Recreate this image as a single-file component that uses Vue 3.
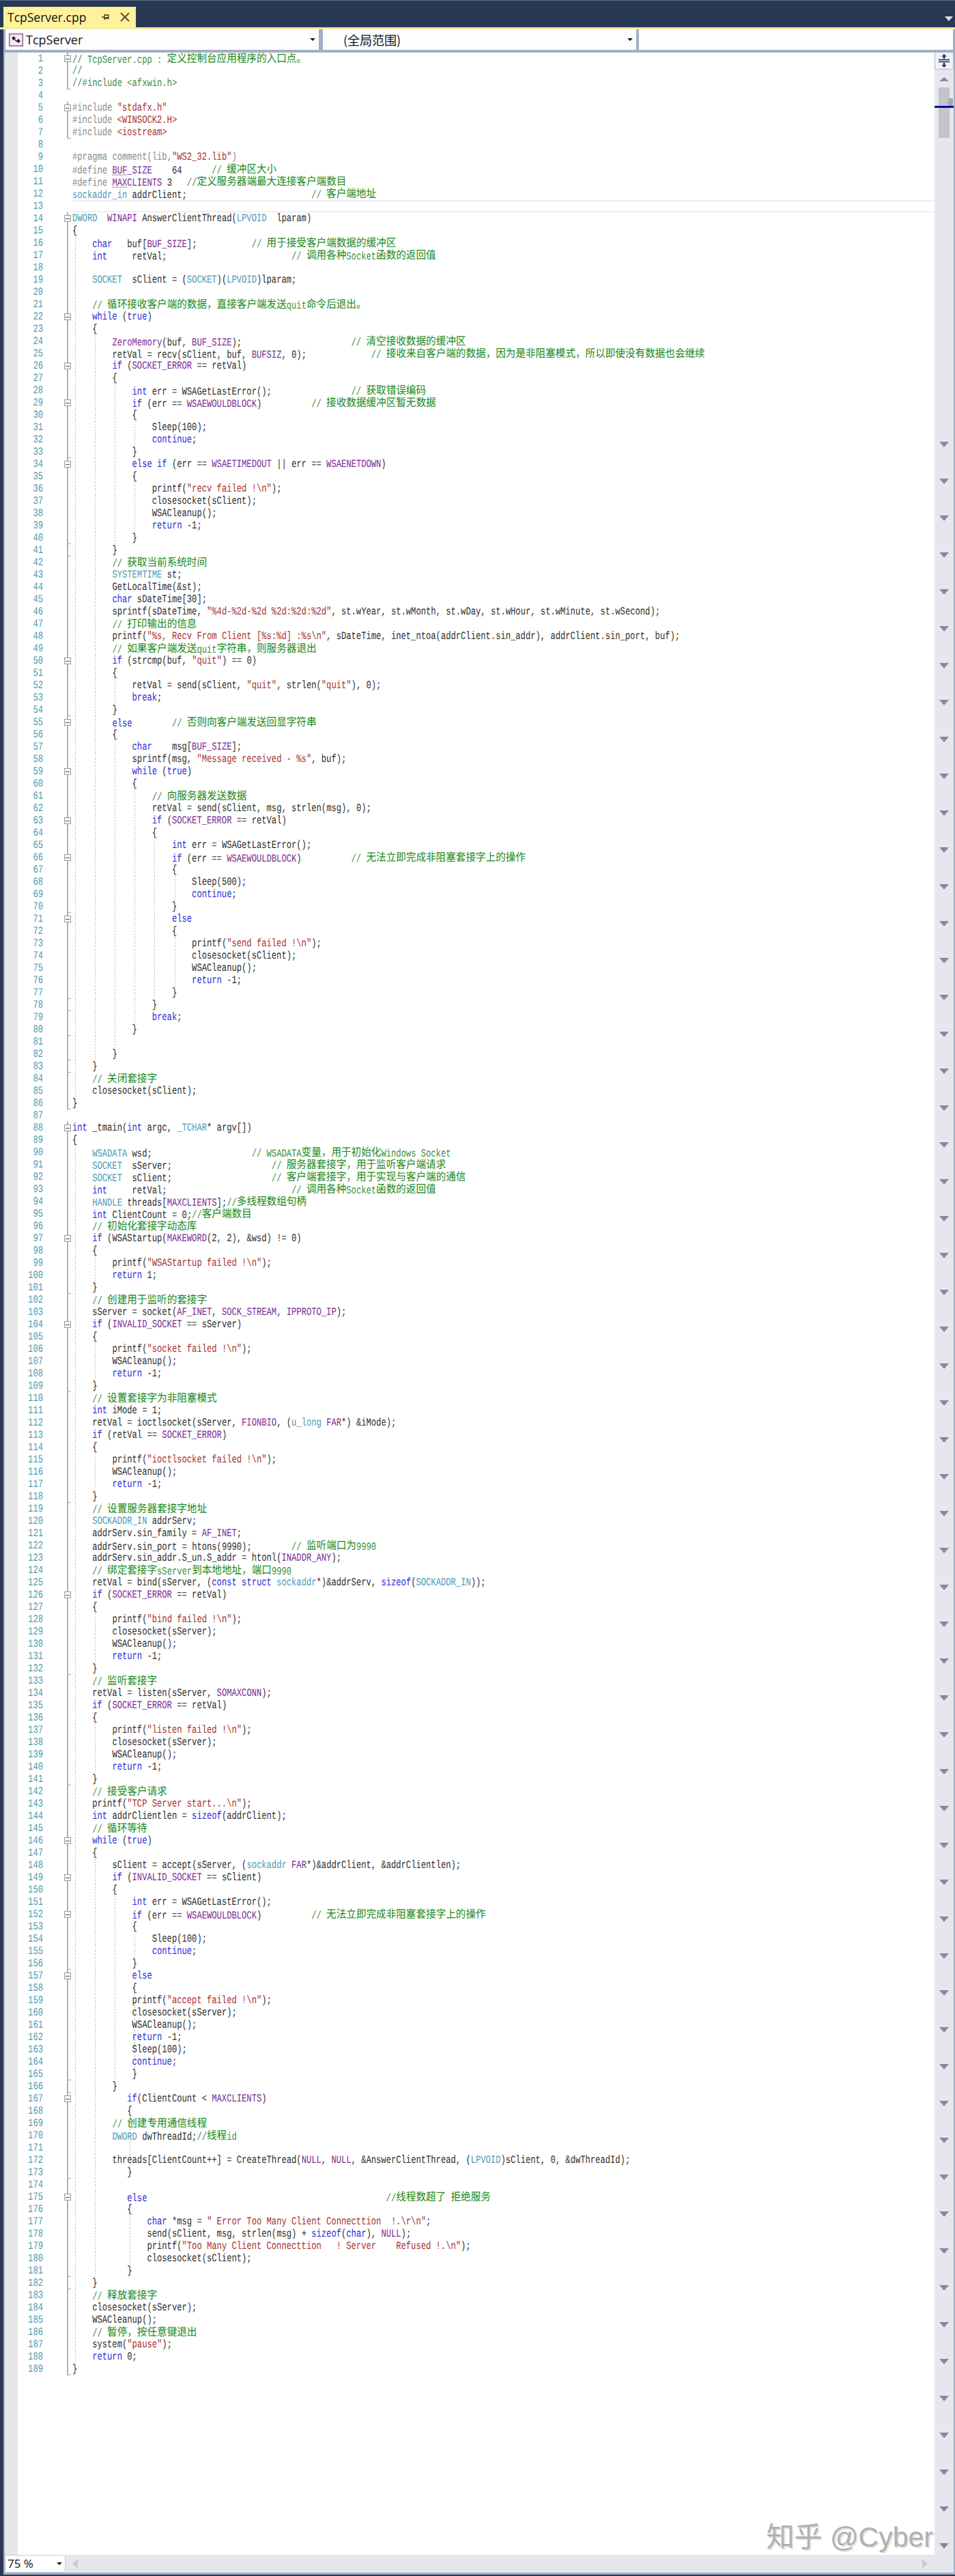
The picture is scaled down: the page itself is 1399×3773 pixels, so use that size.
<script setup>
const source = String.raw`// TcpServer.cpp : 定义控制台应用程序的入口点。
//
//#include <afxwin.h>

#include "stdafx.h"
#include <WINSOCK2.H>
#include <iostream>

#pragma comment(lib,"WS2_32.lib")
#define BUF_SIZE    64      // 缓冲区大小
#define MAXCLIENTS 3   //定义服务器端最大连接客户端数目
sockaddr_in addrClient;                         // 客户端地址

DWORD  WINAPI AnswerClientThread(LPVOID  lparam)
{
    char   buf[BUF_SIZE];           // 用于接受客户端数据的缓冲区
    int     retVal;                         // 调用各种Socket函数的返回值

    SOCKET  sClient = (SOCKET)(LPVOID)lparam;

    // 循环接收客户端的数据，直接客户端发送quit命令后退出。
    while (true)
    {
        ZeroMemory(buf, BUF_SIZE);                      // 清空接收数据的缓冲区
        retVal = recv(sClient, buf, BUFSIZ, 0);             // 接收来自客户端的数据，因为是非阻塞模式，所以即使没有数据也会继续
        if (SOCKET_ERROR == retVal)
        {
            int err = WSAGetLastError();                // 获取错误编码
            if (err == WSAEWOULDBLOCK)          // 接收数据缓冲区暂无数据
            {
                Sleep(100);
                continue;
            }
            else if (err == WSAETIMEDOUT || err == WSAENETDOWN)
            {
                printf("recv failed !\n");
                closesocket(sClient);
                WSACleanup();
                return -1;
            }
        }
        // 获取当前系统时间
        SYSTEMTIME st;
        GetLocalTime(&st);
        char sDateTime[30];
        sprintf(sDateTime, "%4d-%2d-%2d %2d:%2d:%2d", st.wYear, st.wMonth, st.wDay, st.wHour, st.wMinute, st.wSecond);
        // 打印输出的信息
        printf("%s, Recv From Client [%s:%d] :%s\n", sDateTime, inet_ntoa(addrClient.sin_addr), addrClient.sin_port, buf);
        // 如果客户端发送quit字符串，则服务器退出
        if (strcmp(buf, "quit") == 0)
        {
            retVal = send(sClient, "quit", strlen("quit"), 0);
            break;
        }
        else        // 否则向客户端发送回显字符串
        {
            char    msg[BUF_SIZE];
            sprintf(msg, "Message received - %s", buf);
            while (true)
            {
                // 向服务器发送数据
                retVal = send(sClient, msg, strlen(msg), 0);
                if (SOCKET_ERROR == retVal)
                {
                    int err = WSAGetLastError();
                    if (err == WSAEWOULDBLOCK)          // 无法立即完成非阻塞套接字上的操作
                    {
                        Sleep(500);
                        continue;
                    }
                    else
                    {
                        printf("send failed !\n");
                        closesocket(sClient);
                        WSACleanup();
                        return -1;
                    }
                }
                break;
            }

        }
    }
    // 关闭套接字
    closesocket(sClient);
}

int _tmain(int argc, _TCHAR* argv[])
{
    WSADATA wsd;                    // WSADATA变量，用于初始化Windows Socket
    SOCKET  sServer;                    // 服务器套接字，用于监听客户端请求
    SOCKET  sClient;                    // 客户端套接字，用于实现与客户端的通信
    int     retVal;                         // 调用各种Socket函数的返回值
    HANDLE threads[MAXCLIENTS];//多线程数组句柄
    int ClientCount = 0;//客户端数目
    // 初始化套接字动态库
    if (WSAStartup(MAKEWORD(2, 2), &wsd) != 0)
    {
        printf("WSAStartup failed !\n");
        return 1;
    }
    // 创建用于监听的套接字
    sServer = socket(AF_INET, SOCK_STREAM, IPPROTO_IP);
    if (INVALID_SOCKET == sServer)
    {
        printf("socket failed !\n");
        WSACleanup();
        return -1;
    }
    // 设置套接字为非阻塞模式
    int iMode = 1;
    retVal = ioctlsocket(sServer, FIONBIO, (u_long FAR*) &iMode);
    if (retVal == SOCKET_ERROR)
    {
        printf("ioctlsocket failed !\n");
        WSACleanup();
        return -1;
    }
    // 设置服务器套接字地址
    SOCKADDR_IN addrServ;
    addrServ.sin_family = AF_INET;
    addrServ.sin_port = htons(9990);        // 监听端口为9990
    addrServ.sin_addr.S_un.S_addr = htonl(INADDR_ANY);
    // 绑定套接字sServer到本地地址，端口9990
    retVal = bind(sServer, (const struct sockaddr*)&addrServ, sizeof(SOCKADDR_IN));
    if (SOCKET_ERROR == retVal)
    {
        printf("bind failed !\n");
        closesocket(sServer);
        WSACleanup();
        return -1;
    }
    // 监听套接字
    retVal = listen(sServer, SOMAXCONN);
    if (SOCKET_ERROR == retVal)
    {
        printf("listen failed !\n");
        closesocket(sServer);
        WSACleanup();
        return -1;
    }
    // 接受客户请求
    printf("TCP Server start...\n");
    int addrClientlen = sizeof(addrClient);
    // 循环等待
    while (true)
    {
        sClient = accept(sServer, (sockaddr FAR*)&addrClient, &addrClientlen);
        if (INVALID_SOCKET == sClient)
        {
            int err = WSAGetLastError();
            if (err == WSAEWOULDBLOCK)          // 无法立即完成非阻塞套接字上的操作
            {
                Sleep(100);
                continue;
            }
            else
            {
            printf("accept failed !\n");
            closesocket(sServer);
            WSACleanup();
            return -1;
            Sleep(100);
            continue;
            }
        }
           if(ClientCount < MAXCLIENTS)
           {
        // 创建专用通信线程
        DWORD dwThreadId;//线程id

        threads[ClientCount++] = CreateThread(NULL, NULL, &AnswerClientThread, (LPVOID)sClient, 0, &dwThreadId);
           }

           else                                                //线程数超了 拒绝服务
           {
               char *msg = " Error Too Many Client Connecttion  !.\r\n";
               send(sClient, msg, strlen(msg) + sizeof(char), NULL);
               printf("Too Many Client Connecttion   ! Server    Refused !.\n");
               closesocket(sClient);
           }
    }
    // 释放套接字
    closesocket(sServer);
    WSACleanup();
    // 暂停，按任意键退出
    system("pause");
    return 0;
}`.split('\n')

const keywords = new Set(['char', 'int', 'while', 'if', 'else', 'return', 'continue', 'break', 'true', 'const', 'struct', 'sizeof'])
const types = new Set(['DWORD', 'SOCKET', 'LPVOID', 'sockaddr_in', 'SYSTEMTIME', 'WSADATA', 'HANDLE', 'SOCKADDR_IN', '_TCHAR', 'sockaddr', 'u_long'])
const macros = new Set(['BUF_SIZE', 'BUFSIZ', 'MAXCLIENTS', 'SOCKET_ERROR', 'MAKEWORD', 'INVALID_SOCKET', 'AF_INET', 'SOCK_STREAM', 'IPPROTO_IP', 'FIONBIO', 'FAR', 'INADDR_ANY', 'SOMAXCONN', 'NULL', 'WINAPI', 'WSAEWOULDBLOCK', 'WSAETIMEDOUT', 'WSAENETDOWN', 'ZeroMemory'])

function tokenize(line) {
  const out = []
  const pre = line.startsWith('#')
  const re = /(\/\/.*$)|("(?:[^"\\]|\\.)*")|(<[\w.]+>)|(#\w+)|([A-Za-z_]\w*)|(\s+|.)/g
  let m
  while ((m = re.exec(line))) {
    if (m[1]) {
      for (const part of m[1].split(/([^\x00-\x7f]+)/)) {
        if (part) out.push({ t: part, c: /[^\x00-\x7f]/.test(part) ? 'cjk' : 'com' })
      }
    } else if (m[2]) out.push({ t: m[2], c: 'str' })
    else if (m[3] && pre) out.push({ t: m[3], c: 'str' })
    else if (m[4]) out.push({ t: m[4], c: 'pre' })
    else if (m[5]) {
      const w = m[5]
      let c = keywords.has(w) ? 'kw' : types.has(w) ? 'ty' : macros.has(w) ? 'mac' : ''
      if (line.startsWith('#pragma')) c = 'pre'
      if (line.startsWith('#define') && macros.has(w)) {
        out.push({ t: w.slice(0, 3), c: 'mac hint' })
        out.push({ t: w.slice(3), c: 'mac' })
      } else out.push({ t: w, c })
    } else out.push({ t: m[3] || m[6], c: line.startsWith('#pragma') ? 'pre' : '' })
  }
  return out
}

const folds = [[1, 3], [5, 7], [14, 86], [22, 83], [26, 41], [29, 33], [34, 40], [50, 54], [55, 82], [59, 80], [63, 78], [66, 70], [71, 77], [88, 189], [97, 101], [104, 109], [113, 118, true], [126, 132], [135, 141, true], [146, 182], [149, 166], [152, 156], [157, 165], [167, 173], [175, 181]]

const stack = []
const rows = source.map((text, i) => {
  const n = i + 1
  const trimmed = text.trim()
  const col = text.length - text.trimStart().length
  if (trimmed.startsWith('}')) stack.pop()
  const guides = stack.map((g) => g * 7.3 + 3.65)
  if (trimmed.startsWith('{')) stack.push(col)
  return {
    n,
    tokens: tokenize(text),
    guides,
    box: folds.some(([s, , hidden]) => s === n && !hidden),
    inside: folds.some(([s, e]) => n > s && n <= e) || folds.some(([s]) => s === n),
    end: folds.some(([, e]) => e === n),
    current: n === 13
  }
})

const downArrows = Array.from({ length: 58 }, (_, i) => i)
</script>

<template>
  <div class="app">
    <div class="tabstrip">
      <div class="tab">
        <span class="tabname">TcpServer.cpp</span>
        <svg class="pin" width="12" height="10" viewBox="0 0 12 10">
          <path d="M0 5h4M4 1v8M4 2h6v5H4M4 6h6" fill="none" stroke="#3a3a20" stroke-width="1.3" />
        </svg>
        <svg class="close" width="14" height="14" viewBox="0 0 14 14">
          <path d="M1 1l12 12M13 1L1 13" fill="none" stroke="#5a5636" stroke-width="2.2" />
        </svg>
      </div>
      <span class="overflow"></span>
    </div>

    <div class="frame">
      <div class="toolbar">
        <div class="combo first">
          <svg class="project" width="21" height="19" viewBox="0 0 21 19">
            <rect x="0.7" y="0.7" width="19.6" height="17.6" fill="#f4e9f2" stroke="#8a5a8c" stroke-width="1.4" />
            <path d="M7 4l3 3-3 3-3-3zM14 8l3 3-3 3-3-3z" fill="#1c1c1c" />
            <path d="M9 9l3 3" stroke="#1c1c1c" stroke-width="1.5" />
          </svg>
          <span>TcpServer</span>
          <i class="caret"></i>
        </div>
        <div class="combo second">
          <span class="scope">(全局范围)</span>
          <i class="caret"></i>
        </div>
        <div class="combo third"></div>
      </div>

      <div class="body">
        <div class="editor">
          <div v-for="row in rows" :key="row.n" class="row">
            <div class="ln"><span class="stretch">{{ row.n }}</span></div>
            <div class="fold" :class="{ inside: row.inside, end: row.end }">
              <span v-if="row.box" class="box"></span>
            </div>
            <div class="code" :class="{ current: row.current }">
              <i v-for="g in row.guides" :key="g" class="guide" :style="{ left: g + 'px' }"></i>
              <span class="stretch"><span
                v-for="(tk, k) in row.tokens"
                :key="k"
                :class="tk.c"
              >{{ tk.t }}</span></span>
            </div>
          </div>
          <div class="watermark">知乎 @Cyber</div>
        </div>

        <div class="vscroll">
          <div class="splitter">
            <svg width="18" height="20" viewBox="0 0 18 20">
              <path d="M1 8.5h16M1 11.5h16" stroke="#1f2a4a" stroke-width="1.4" />
              <path d="M9 0l3.5 4h-2.3v3H7.800V4H5.500zM9 20l3.500-4h-2.300v-3H7.800v3H5.500z" fill="#1f2a4a" />
            </svg>
          </div>
          <i class="up"></i>
          <div class="thumb">
            <i class="sq"></i>
            <i class="mark"></i>
          </div>
          <div class="downs">
            <i v-for="d in downArrows" :key="d" class="down"></i>
          </div>
        </div>
      </div>

      <div class="hbar">
        <div class="zoomsel">
          <span>75 %</span>
          <i class="caret"></i>
        </div>
        <i class="left"></i>
        <i class="right"></i>
      </div>
    </div>
  </div>
</template>

<style>
html, body { margin: 0; background: #293955; }
</style>

<style scoped>
.app {
  width: 1399px;
  height: 3773px;
  background: #293955;
  display: flex;
  flex-direction: column;
  padding-bottom: 2px;
  box-sizing: border-box;
  overflow: hidden;
  border-top: 1px solid #5d6c89;
}
.tabstrip {
  height: 39px;
  flex: none;
  box-sizing: content-box;
  border-bottom: 3px solid #f6eea6;
  display: flex;
  align-items: flex-end;
  padding-left: 5px;
  position: relative;
}
.tab {
  width: 194px;
  height: 30px;
  background: #fff29d;
  display: flex;
  align-items: center;
  padding-left: 6px;
  box-sizing: border-box;
  color: #111;
}
.tabname {
  font: 17.500px/30px "Open Sans", "Noto Sans", sans-serif;
  width: 138px;
  flex: none;
}
.close { margin-left: 15px; }
.overflow {
  position: absolute;
  right: 3px;
  bottom: 9px;
  border-left: 6px solid transparent;
  border-right: 6px solid transparent;
  border-top: 7px solid #d9dde8;
}
.frame {
  flex: 1;
  min-height: 0;
  margin-left: 5px;
  background: #a3adc5;
  padding: 0 2px 3px;
  display: flex;
  flex-direction: column;
}
.toolbar {
  flex: none;
  height: 30px;
  border-bottom: 4px solid #a3adc5;
  padding-left: 1px;
  display: flex;
  box-sizing: content-box;
}
.combo {
  background: #fdfdfd;
  height: 30px;
  display: flex;
  align-items: center;
  position: relative;
  font: 18px/30px "Open Sans", "Noto Sans", sans-serif;
  color: #151515;
}
.first { width: 459px; padding-left: 5px; box-sizing: border-box; margin-right: 6px; }
.first span { margin-left: 4px; }
.second { width: 459px; margin-right: 4px; }
.third { flex: 1; margin-right: 1px; }
.scope {
  margin-left: 30px;
  font-family: "Noto Sans CJK SC", "Open Sans", sans-serif;
  font-size: 18px;
}
.caret {
  position: absolute;
  right: 5px;
  top: 13px;
  border-left: 4px solid transparent;
  border-right: 4px solid transparent;
  border-top: 4px solid #1b1b1b;
}
.body {
  flex: 1;
  min-height: 0;
  display: flex;
}
.editor {
  flex: 1;
  min-width: 0;
  position: relative;
  background: linear-gradient(90deg, #e6e7e8 19px, #fff 19px);
}
.row {
  display: flex;
  height: 18px;
  font: 12.170px/18px "Liberation Mono", monospace;
  text-rendering: geometricPrecision;
  color: #2c2c2c;
}
.ln {
  margin-left: 18px;
  width: 38px;
  text-align: right;
  color: #4a9ab4;
}
.stretch {
  display: inline-block;
  white-space: pre;
  transform: scaleY(1.32);
  transform-origin: 50% 50%;
}
.fold {
  margin-left: 30px;
  width: 13px;
  flex: none;
  position: relative;
}
.fold.inside::before {
  content: "";
  position: absolute;
  left: 5px;
  top: 0;
  bottom: 0;
  width: 2px;
  background: #b2b2b2;
}
.fold.end::after {
  content: "";
  position: absolute;
  left: 5px;
  bottom: 0;
  width: 6px;
  height: 1px;
  background: #a8a8a8;
}
.box {
  position: absolute;
  left: 1px;
  top: 4px;
  width: 10px;
  height: 10px;
  box-sizing: border-box;
  background: linear-gradient(#5a5a5a, #5a5a5a) center / 6px 1px no-repeat #f5f5f5;
  border: 1px solid #9c9c9c;
  z-index: 1;
}
.code {
  flex: 1;
  min-width: 0;
  position: relative;
  white-space: pre;
}
.code.current {
  box-shadow: inset 0 2px 0 #eeeef2, inset 0 -2px 0 #eeeef2;
}
.guide {
  position: absolute;
  top: 0;
  bottom: 0;
  width: 1px;
  background: repeating-linear-gradient(#c4c4c4 0 2px, transparent 2px 4px);
}
.kw { color: #2a2ad6; }
.ty { color: #4a9ab4; }
.mac { color: #7a2a92; }
.str { color: #a83030; }
.pre { color: #8a8a8a; }
.com { color: #3a8f3a; }
.hint { text-decoration: underline dotted #777; }
.cjk {
  display: inline-block;
  color: #1a8a1a;
  font-family: "Noto Sans CJK SC", sans-serif;
  font-size: 14.600px;
  line-height: 18px;
  transform: scaleY(0.84);
}
.watermark {
  position: absolute;
  right: 2px;
  bottom: 2px;
  font: 41px/48px "Liberation Sans", "Noto Sans CJK SC", sans-serif;
  color: #b0b0b0;
  text-shadow: 2px 2px 0 #e0e0e0;
  white-space: nowrap;
}
.vscroll {
  flex: none;
  width: 28px;
  background: #e6e7ec;
  display: flex;
  flex-direction: column;
  align-items: center;
}
.splitter {
  width: 28px;
  height: 25px;
  box-sizing: border-box;
  background: #eef1fa;
  border: 1px solid #b6bac9;
  border-top: 0;
  display: flex;
  align-items: center;
  justify-content: center;
}
.up {
  margin-top: 11px;
  border-left: 7px solid transparent;
  border-right: 7px solid transparent;
  border-bottom: 6px solid #87889a;
}
.thumb {
  margin-top: 9px;
  width: 16px;
  height: 74px;
  background: #c3c4ca;
  position: relative;
  flex: none;
}
.sq {
  position: absolute;
  left: 14px;
  top: 16px;
  width: 7px;
  height: 11px;
  background: #a9a9ad;
}
.mark {
  position: absolute;
  left: -6px;
  top: 27px;
  width: 28px;
  height: 3px;
  background: #0a0a9c;
}
.downs {
  margin-top: 445px;
  display: flex;
  flex-direction: column;
  gap: 46px;
}
.down {
  display: block;
  border-left: 7px solid transparent;
  border-right: 7px solid transparent;
  border-top: 8px solid #87889a;
}
.hbar {
  flex: none;
  height: 26px;
  background: #e6e7ec;
  display: flex;
  align-items: center;
}
.zoomsel {
  width: 89px;
  height: 26px;
  box-sizing: border-box;
  background: #fff;
  border: 1px solid #c8cbdc;
  position: relative;
  font: 17px/24px "Open Sans", sans-serif;
  color: #111;
  padding-left: 3px;
}
.zoomsel .caret { right: 4px; top: 10px; }
.left {
  margin-left: 10px;
  border-top: 7px solid transparent;
  border-bottom: 7px solid transparent;
  border-right: 8px solid #c9cad1;
}
.right {
  margin-left: auto;
  margin-right: 38px;
  border-top: 7px solid transparent;
  border-bottom: 7px solid transparent;
  border-left: 8px solid #c9cad1;
}
</style>
